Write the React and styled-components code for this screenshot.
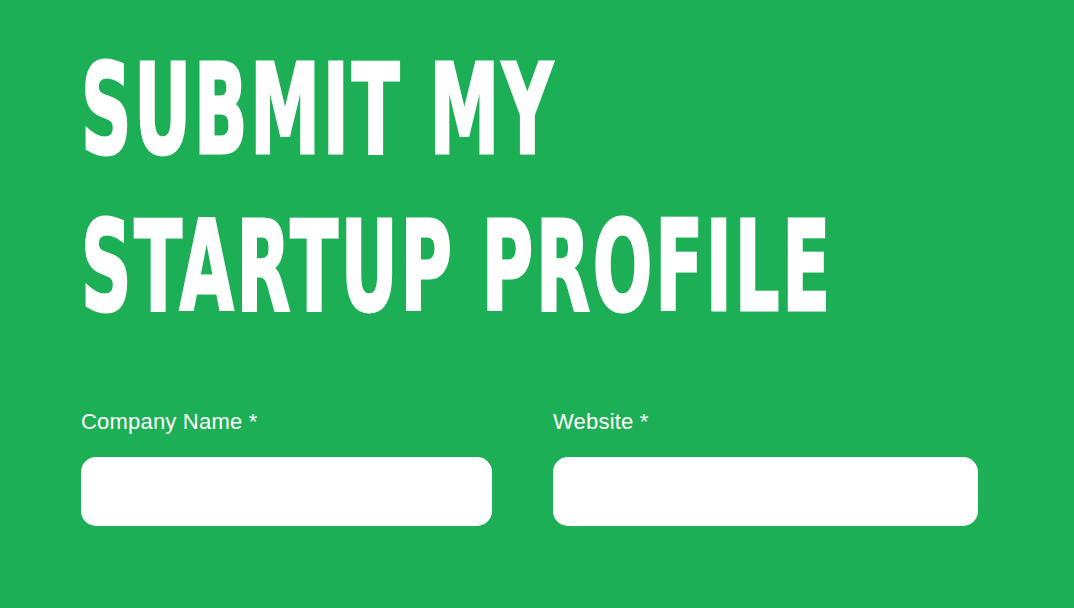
import React from "react";
import styled, { createGlobalStyle } from "styled-components";

const Global = createGlobalStyle`
  html, body {
    margin: 0;
    padding: 0;
    background: #1daf56;
  }
  body {
    font-family: "Liberation Sans", Arial, sans-serif;
  }
`;

const Page = styled.main`
  min-height: 608px;
  background: #1daf56;
  padding: 32px 0 0 81px;
  box-sizing: border-box;
  overflow: hidden;
`;

const Title = styled.h1`
  margin: 0;
  font-family: "DejaVu Sans", sans-serif;
  font-weight: 700;
  font-size: 124px;
  line-height: 157px;
  color: #ffffff;
  -webkit-text-stroke: 3px #ffffff;
  text-transform: uppercase;
  letter-spacing: 5px;
  white-space: nowrap;
  transform: scaleX(0.565);
  transform-origin: left top;
`;

const Line = styled.span`
  display: block;
`;

const Form = styled.form`
  display: grid;
  grid-template-columns: 411px 425px;
  column-gap: 61px;
  margin-top: 63px;
`;

const Field = styled.div`
  display: flex;
  flex-direction: column;
  gap: 22px;
`;

const Label = styled.label`
  font-family: "Liberation Sans", Arial, sans-serif;
  font-size: 22px;
  line-height: 26px;
  letter-spacing: 0.2px;
  color: #ffffff;
`;

const Input = styled.input`
  box-sizing: border-box;
  width: 100%;
  height: 69px;
  border: none;
  border-radius: 15px;
  background: #ffffff;
  padding: 0 18px;
  font-size: 20px;
  font-family: "Liberation Sans", Arial, sans-serif;
  outline: none;
`;

export default function App() {
  return (
    <>
      <Global />
      <Page>
        <Title>
          <Line>Submit my</Line>
          <Line>Startup profile</Line>
        </Title>
        <Form onSubmit={(e) => e.preventDefault()}>
          <Field>
            <Label htmlFor="company">Company Name *</Label>
            <Input id="company" type="text" />
          </Field>
          <Field>
            <Label htmlFor="website">Website *</Label>
            <Input id="website" type="text" />
          </Field>
        </Form>
      </Page>
    </>
  );
}
